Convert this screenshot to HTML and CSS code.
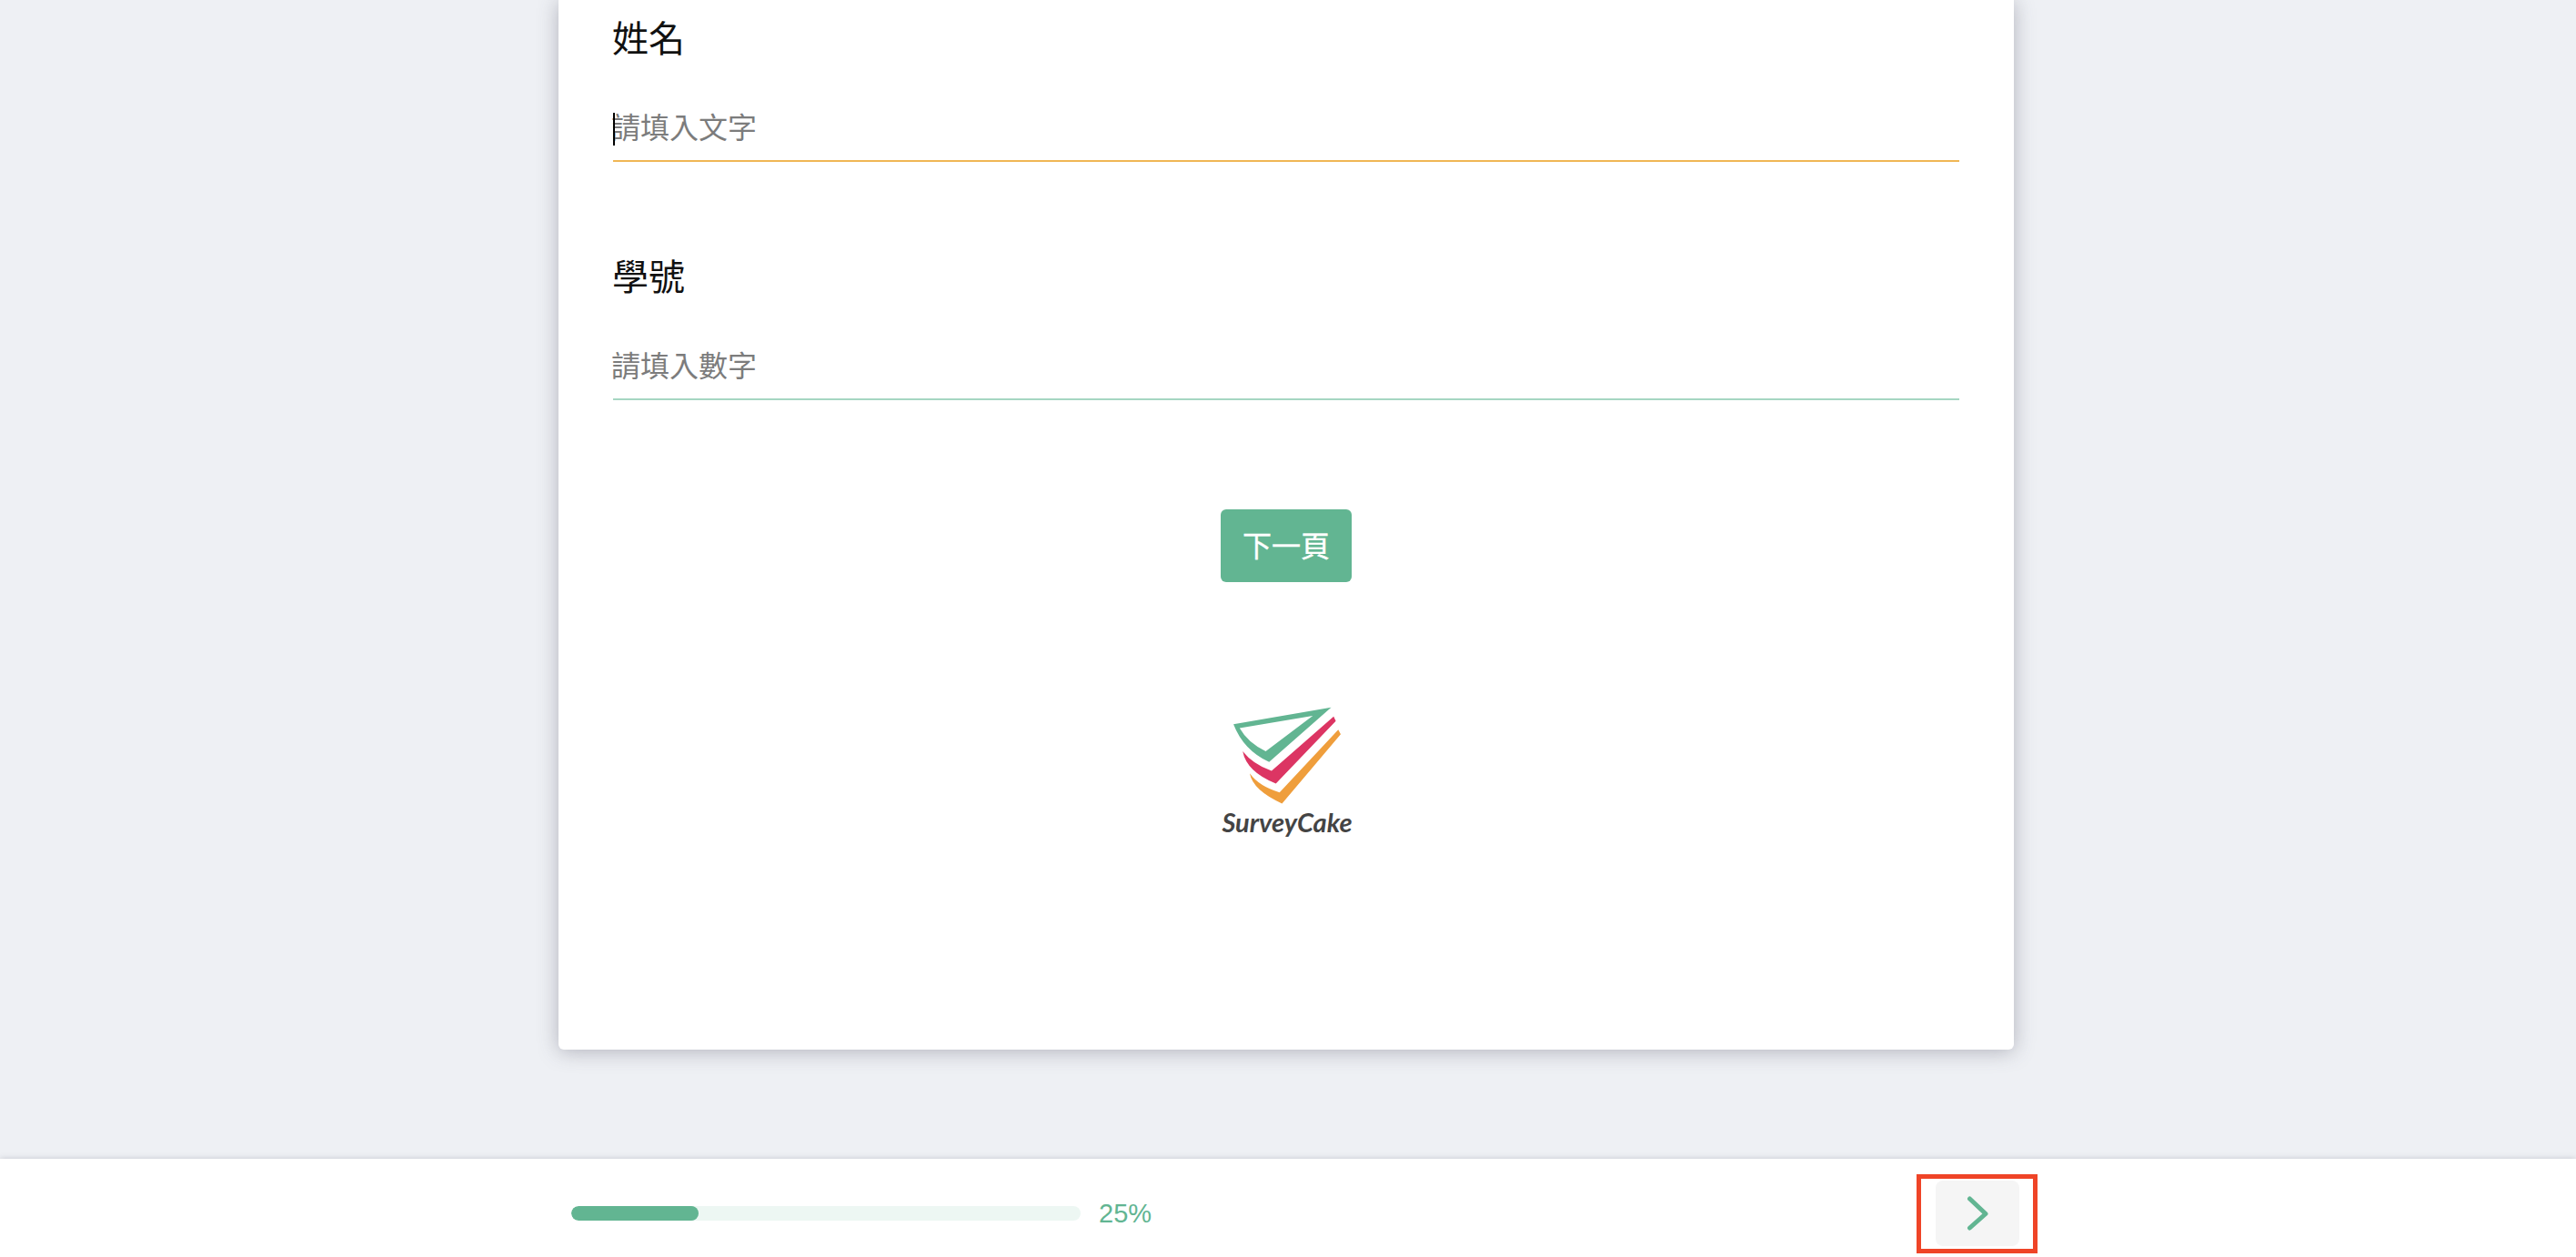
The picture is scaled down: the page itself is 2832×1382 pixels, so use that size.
FILE: index.html
```html
<!DOCTYPE html>
<html lang="zh-Hant">
<head>
    <meta charset="UTF-8">
    <meta name="viewport" content="width=device-width, initial-scale=1.0">
    <title>SurveyCake</title>
    <link rel="stylesheet" href="styles.css">
</head>
<body>
    <main class="page">
        <div class="card">
            <form class="survey-form">
                <div class="form-group">
                    <label for="name">姓名</label>
                    <div class="input-wrap input-focus">
                        <span class="caret"></span>
                        <input type="text" id="name" placeholder="請填入文字">
                    </div>
                </div>
                <div class="form-group">
                    <label for="studentId">學號</label>
                    <div class="input-wrap">
                        <input type="text" id="studentId" placeholder="請填入數字">
                    </div>
                </div>
                <div class="actions">
                    <button type="button" class="btn">下一頁</button>
                </div>
            </form>
            <div class="brand">
                <svg class="brand-mark" viewBox="160 105 370 330" aria-hidden="true">
                    <path fill="#62B592" fill-rule="evenodd" d="M172 170 L490 115 L288 293 Q205 255 172 170 Z M192 183 Q220 232 277 258 L430 143 Z"/>
                    <path fill="#DC3563" d="M202 258 Q235 300 296 322 L498 145 L505 160 L310 363 Q215 325 202 258 Z"/>
                    <path fill="#EF9E3C" d="M225 330 Q255 372 322 392 L513 188 L521 203 L330 428 Q235 385 225 330 Z"/>
                </svg>
                <div class="brand-name">SurveyCake</div>
            </div>
        </div>
    </main>
    <footer class="footer">
        <div class="progress">
            <div class="progress-track">
                <div class="progress-fill" style="width: 25%"></div>
            </div>
            <span class="progress-text">25%</span>
        </div>
        <button type="button" class="next-btn" aria-label="next">
            <svg width="24" height="38" viewBox="0 0 24 38" aria-hidden="true">
                <path d="M3.5 3 L21 19.5 L3.5 35" fill="none" stroke="#62B592" stroke-width="5" stroke-linecap="round" stroke-linejoin="round"/>
            </svg>
        </button>
        <span class="highlight-box"></span>
    </footer>
</body>
</html>
```

FILE: styles.css
```css
html, body {
    height: 100%;
}
body {
    font-family: "Liberation Sans", "Noto Sans CJK TC", sans-serif;
    margin: 0;
    padding: 0;
    height: 1382px;
    overflow: hidden;
    display: flex;
    flex-direction: column;
    background-color: #EEF0F4;
}
.page {
    height: 1274px;
    padding-left: 614px;
    box-sizing: border-box;
}
.card {
    width: 1600px;
    height: 1154px;
    box-sizing: border-box;
    padding: 0 60px;
    background: #FFFFFF;
    border-radius: 0 0 6px 6px;
    box-shadow: 0 2px 22px rgba(70, 70, 90, 0.36);
}
.form-group {
    padding-top: 16px;
    height: 262px;
    box-sizing: border-box;
}
.form-group label {
    display: block;
    margin-left: -1px;
    font-size: 40px;
    line-height: 54px;
    color: #111111;
}
.input-wrap {
    position: relative;
    margin-top: 32px;
    border-bottom: 2px solid #A6D6C2;
}
.input-wrap input {
    display: block;
    width: 100%;
    height: 74px;
    margin-left: -2px;
    box-sizing: border-box;
    padding: 4px 0 0 0;
    border: none;
    outline: none;
    font-family: "Liberation Sans", "Noto Sans CJK TC", sans-serif;
    font-size: 32px;
    color: #333333;
    background: transparent;
}
.input-wrap input::placeholder {
    color: #7C7C7C;
    opacity: 1;
}
.input-focus {
    border-bottom-color: #F0B755;
}
.caret {
    position: absolute;
    left: 0;
    top: 22px;
    width: 2px;
    height: 36px;
    background: #000000;
}
.actions {
    display: flex;
    justify-content: center;
    margin-top: 36px;
}
.btn {
    width: 144px;
    height: 80px;
    padding: 0 0 5px 0;
    background-color: #62B592;
    color: white;
    border: none;
    border-radius: 6px;
    font-family: "Liberation Sans", "Noto Sans CJK TC", sans-serif;
    font-size: 32px;
    -webkit-text-stroke: 0.4px white;
    cursor: pointer;
}
.brand {
    display: flex;
    flex-direction: column;
    align-items: center;
    margin-top: 134px;
}
.brand-mark {
    width: 125px;
    height: 112px;
    display: block;
}
.brand-name {
    margin-top: -2px;
    margin-left: 2px;
    font-family: "Lato", sans-serif;
    font-style: italic;
    font-weight: 700;
    font-size: 29px;
    line-height: 40px;
    color: #444444;
}
.footer {
    position: relative;
    height: 108px;
    box-sizing: border-box;
    padding: 12px 612px 0 628px;
    display: flex;
    justify-content: space-between;
    align-items: center;
    background: #FFFFFF;
    box-shadow: 0 0 6px rgba(70, 70, 90, 0.25);
}
.progress {
    display: flex;
    align-items: center;
    gap: 20px;
}
.progress-track {
    width: 560px;
    height: 16px;
    background: #EDF7F3;
    border-radius: 8px;
    overflow: hidden;
}
.progress-fill {
    height: 100%;
    background: #62B592;
    border-radius: 8px;
}
.progress-text {
    font-size: 29px;
    color: #62B592;
}
.next-btn {
    width: 92px;
    height: 72px;
    padding: 0;
    background: #F5F5F5;
    border: none;
    border-radius: 8px;
    display: flex;
    align-items: center;
    justify-content: center;
    cursor: pointer;
}
/* red annotation drawn on top of the screenshot */
.highlight-box {
    position: absolute;
    left: 2107px;
    top: 17px;
    width: 133px;
    height: 87px;
    box-sizing: border-box;
    border: 5px solid #EF4427;
}
```
